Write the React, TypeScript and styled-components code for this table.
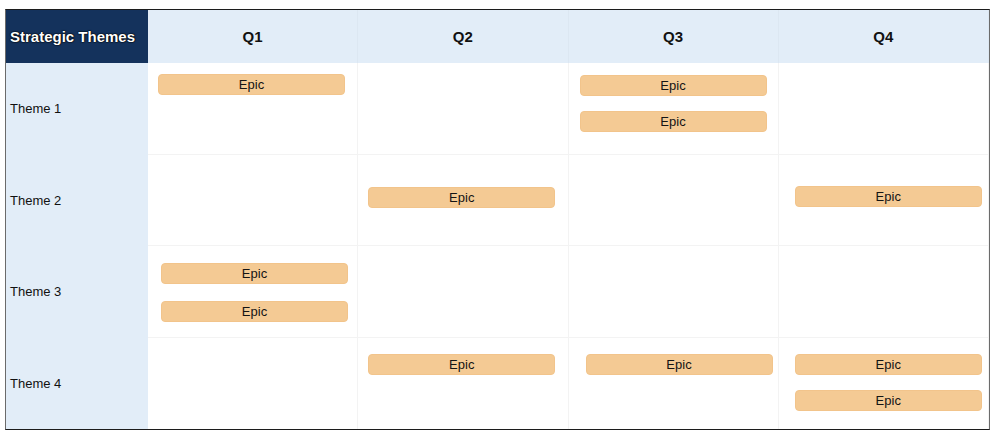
import React from "react";
import styled, { createGlobalStyle } from "styled-components";

const GlobalStyle = createGlobalStyle`
  html, body {
    margin: 0;
    padding: 0;
    background: #ffffff;
    font-family: "Liberation Sans", Arial, sans-serif;
  }
`;

interface ICell {
  dx?: number;
  dy?: number;
  gap?: number;
  epics: number;
}

interface IRow {
  name: string;
  cells: ICell[];
}

const quarters = ["Q1", "Q2", "Q3", "Q4"];

const rows: IRow[] = [
  {
    name: "Theme 1",
    cells: [
      { dx: 10, dy: 11, epics: 1 },
      { epics: 0 },
      { dx: 11, dy: 12, epics: 2 },
      { epics: 0 },
    ],
  },
  {
    name: "Theme 2",
    cells: [
      { epics: 0 },
      { dx: 10, dy: 32, epics: 1 },
      { epics: 0 },
      { dx: 16, dy: 31, epics: 1 },
    ],
  },
  {
    name: "Theme 3",
    cells: [
      { dx: 13, dy: 17, gap: 17, epics: 2 },
      { epics: 0 },
      { epics: 0 },
      { epics: 0 },
    ],
  },
  {
    name: "Theme 4",
    cells: [
      { epics: 0 },
      { dx: 10, dy: 16, epics: 1 },
      { dx: 17, dy: 16, epics: 1 },
      { dx: 16, dy: 16, epics: 2 },
    ],
  },
];

const Page = styled.div`
  padding: 9px 0 0 5px;
`;

const Board = styled.div`
  box-sizing: border-box;
  width: 985px;
  height: 421px;
  display: grid;
  grid-template-columns: 142px repeat(4, 1fr);
  grid-template-rows: 53px repeat(4, 1fr);
  border: 1px solid #1c1c1c;
  border-left-color: #6b6b6b;
  border-right-color: #6b6b6b;
`;

const TitleCell = styled.div`
  display: flex;
  align-items: center;
  padding-left: 4px;
  background: #14325c;
  color: #ffffff;
  font-size: 15px;
  font-weight: 700;
  text-shadow: 0 0 2px #000000, 0 0 1px #000000, 0 0 1px #000000;
`;

const QuarterCell = styled.div`
  display: flex;
  align-items: center;
  justify-content: center;
  background: #e2edf8;
  border-right: 1px solid rgba(0, 0, 0, 0.025);
  color: #111111;
  font-size: 15px;
  font-weight: 700;
`;

const ThemeCell = styled.div`
  display: flex;
  align-items: center;
  padding-left: 4px;
  background: #e2edf8;
  color: #111111;
  font-size: 13px;
`;

const Cell = styled.div<{ $dx: number; $dy: number; $gap: number; $last: boolean }>`
  display: flex;
  flex-direction: column;
  gap: ${(p) => p.$gap}px;
  padding: ${(p) => p.$dy}px 0 0 ${(p) => p.$dx}px;
  border-right: 1px solid #f3f3f3;
  border-bottom: ${(p) => (p.$last ? "none" : "1px solid #f3f3f3")};
  min-width: 0;
`;

const Epic = styled.div`
  box-sizing: border-box;
  width: 187px;
  height: 21px;
  display: flex;
  align-items: center;
  justify-content: center;
  background: #f4ca94;
  border: 1px solid #f2c48b;
  border-radius: 4px;
  color: #141414;
  font-size: 13px;
`;

export default function App() {
  return (
    <Page>
      <GlobalStyle />
      <Board>
        <TitleCell>Strategic Themes</TitleCell>
        {quarters.map((q) => (
          <QuarterCell key={q}>{q}</QuarterCell>
        ))}
        {rows.map((row, ri) => (
          <React.Fragment key={row.name}>
            <ThemeCell>{row.name}</ThemeCell>
            {row.cells.map((cell, ci) => (
              <Cell
                key={ci}
                $dx={cell.dx ?? 0}
                $dy={cell.dy ?? 0}
                $gap={cell.gap ?? 15}
                $last={ri === rows.length - 1}
              >
                {Array.from({ length: cell.epics }).map((_, ei) => (
                  <Epic key={ei}>Epic</Epic>
                ))}
              </Cell>
            ))}
          </React.Fragment>
        ))}
      </Board>
    </Page>
  );
}
